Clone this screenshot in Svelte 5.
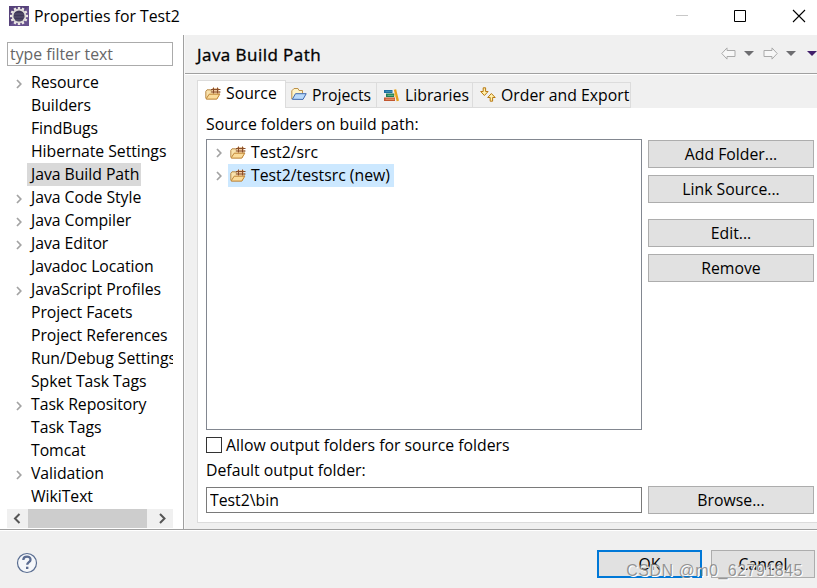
<script lang="ts">
	type Category = { name: string; expandable?: boolean };

	const categories: Category[] = [
		{ name: 'Resource', expandable: true },
		{ name: 'Builders' },
		{ name: 'FindBugs' },
		{ name: 'Hibernate Settings' },
		{ name: 'Java Build Path' },
		{ name: 'Java Code Style', expandable: true },
		{ name: 'Java Compiler', expandable: true },
		{ name: 'Java Editor', expandable: true },
		{ name: 'Javadoc Location' },
		{ name: 'JavaScript Profiles', expandable: true },
		{ name: 'Project Facets' },
		{ name: 'Project References' },
		{ name: 'Run/Debug Settings' },
		{ name: 'Spket Task Tags' },
		{ name: 'Task Repository', expandable: true },
		{ name: 'Task Tags' },
		{ name: 'Tomcat' },
		{ name: 'Validation', expandable: true },
		{ name: 'WikiText' }
	];

	const tabs = [
		{ id: 'source', label: 'Source' },
		{ id: 'projects', label: 'Projects' },
		{ id: 'libraries', label: 'Libraries' },
		{ id: 'order', label: 'Order and Export' }
	];

	const folders = ['Test2/src', 'Test2/testsrc (new)'];
	const teeth = Array.from({ length: 12 }, (_, i) => i * 30);

	let category = $state('Java Build Path');
	let tab = $state('source');
	let folder = $state('Test2/testsrc (new)');
	let output = $state('Test2\\bin');
	let allow = $state(false);
</script>

{#snippet chevron()}
	<svg class="chevron" width="6" height="10" viewBox="0 0 6 10">
		<path d="M1 1 4.8 5 1 9" fill="none" stroke="#a3a3a3" stroke-width="1.7" />
	</svg>
{/snippet}

{#snippet sourceIcon()}
	<svg width="16" height="13" viewBox="0 0 16 13">
		<path d="M.8 11V4.3l1.2-1.5h3.5l1 1.2H14v2.5l-2 5.2H1.3z" fill="#f9e2ac" stroke="#b98a48" />
		<path d="M7 1h7v5.5H7z" fill="#edc9a0" />
		<path d="M5.8 2.5h9.7M5.8 5h9.7M8.5.5v6M12.5.5v6" fill="none" stroke="#8a4f2b" />
		<path d="m1.2 11.8 3-4.6h10.6l-3 4.9H1.3z" fill="#fbdc9b" stroke="#c08535" />
	</svg>
{/snippet}

{#snippet tabIcon(id: string)}
	{#if id === 'source'}
		{@render sourceIcon()}
	{:else if id === 'projects'}
		<svg class="raised" width="16" height="14" viewBox="0 0 16 14">
			<path d="M.8 12V3.8L3 1.5h4l1 2h3.5v3" fill="#fff3c7" stroke="#bd9149" />
			<path d="M1.3 12.3 4.5 6.7h10.7L12 12.4z" fill="#b9d9fb" stroke="#4169ad" />
		</svg>
	{:else if id === 'libraries'}
		<svg width="16" height="13" viewBox="0 0 16 13">
			<path d="M1 1h8.5v3H1z" fill="#1f6fa3" />
			<path d="M2.5 2.5H9" stroke="#3f8fb4" />
			<path d="M3 4.5h8v3.5H3z" fill="#1e7d55" />
			<path d="M4.5 6.3h6" stroke="#6fbd94" />
			<path d="M1 8.5h11V12H1z" fill="#c2562f" />
			<path d="M2.5 10.2h9" stroke="#eca47a" />
			<path d="m12 .5 2.8 11.5" stroke="#e7a01c" stroke-width="2.4" />
			<path d="m11.5 4.5.8 3.5" stroke="#f2bd45" stroke-width="1.2" />
		</svg>
	{:else}
		<svg class="raised" width="16" height="15" viewBox="0 0 16 15">
			<path d="M3.2.8h2.4v3.7h2.5L4.4 8.5.7 4.5h2.5z" fill="#fff0ab" stroke="#b87913" />
			<path d="M10.2 14.2h2.4v-3.7h2.6l-3.8-4-3.7 4h2.5z" fill="#fff0ab" stroke="#b87913" />
		</svg>
	{/if}
{/snippet}

{#snippet arrow()}
	<svg width="15" height="13" viewBox="0 0 15 13">
		<path d="M.8 6.5 6 .9v2.6h8v6H6v2.6z" fill="#f7f7f7" stroke="#aaa" />
	</svg>
{/snippet}

{#snippet caret()}
	<svg class="caret" width="10" height="5" viewBox="0 0 10 5"><path d="M0 0h10L5 5z" fill="currentColor" /></svg>
{/snippet}

<div class="window">
	<header class="titlebar">
		<svg class="logo" width="20" height="20" viewBox="0 0 20 20">
			<path d="M0 0h20v20H0z" fill="#56427a" />
			<path d="M0 20 20 0v20z" fill="#67528d" />
			{#each teeth as angle}
				<path d="M8.8 1h2.4v4H8.8z" fill="#eeeae6" transform="rotate({angle} 10 10)" />
			{/each}
			<circle cx="10" cy="10" r="6.4" fill="#3f3858" stroke="#dedbd8" stroke-width="1.8" />
			<path d="M5 8h10M4.5 11h11M6 14h8" stroke="#5d5672" />
		</svg>
		<span class="title">Properties for Test2</span>
		<svg class="controls" width="131" height="14" viewBox="0 0 131 14">
			<path d="M1 6.5h12" stroke="#c8c8c8" />
			<path d="M59.5 1.5h11v11h-11z" fill="none" stroke="#000" />
			<path d="m118 1 12 12m0-12-12 12" stroke="#000" stroke-width="1.1" />
		</svg>
	</header>

	<div class="body">
		<aside>
			<input class="filter" placeholder="type filter text" />
			<div class="categories">
				{#each categories as item}
					<button class="category" onclick={() => (category = item.name)}>
						<span class="twist">{#if item.expandable}{@render chevron()}{/if}</span>
						<span class="name" class:selected={category === item.name}>{item.name}</span>
					</button>
				{/each}
			</div>
			<div class="scrollbar">
				<svg width="21" height="19" viewBox="0 0 21 19"><path d="M12.5 5 8 9.5l4.5 4.5" fill="none" stroke="#555" stroke-width="2" /></svg>
				<div class="thumb"></div>
				<svg width="26" height="19" viewBox="0 0 26 19"><path d="m13 5 4.5 4.5L13 14" fill="none" stroke="#555" stroke-width="2" /></svg>
			</div>
		</aside>

		<main>
			<div class="heading">
				<h1>Java Build Path</h1>
				<div class="history">
					{@render arrow()}
					{@render caret()}
					<span class="forward">{@render arrow()}</span>
					{@render caret()}
					<span class="menu">{@render caret()}</span>
				</div>
			</div>

			<div class="tabs">
				{#each tabs as item}
					<button class="tab {item.id}" class:active={tab === item.id} onclick={() => (tab = item.id)}>
						{@render tabIcon(item.id)}
						<span>{item.label}</span>
					</button>
				{/each}
			</div>

			<section class="panel">
				<p class="label">Source folders on build path:</p>
				<div class="columns">
					<div class="folders">
						{#each folders as item}
							<button class="folder" onclick={() => (folder = item)}>
								{@render chevron()}
								<span class="path" class:current={folder === item}>{@render sourceIcon()}<span>{item}</span></span>
							</button>
						{/each}
					</div>
					<div class="actions">
						<button class="push">Add Folder...</button>
						<button class="push">Link Source...</button>
						<button class="push gap">Edit...</button>
						<button class="push">Remove</button>
					</div>
				</div>
				<label class="allow"><input type="checkbox" bind:checked={allow} /><span>Allow output folders for source folders</span></label>
				<p class="label output">Default output folder:</p>
				<div class="columns">
					<input class="location" bind:value={output} />
					<button class="push">Browse...</button>
				</div>
			</section>
		</main>
	</div>

	<footer>
		<svg class="help" width="22" height="22" viewBox="0 0 22 22">
			<circle cx="11" cy="11" r="9.5" fill="#f5f7fa" stroke="#596d91" stroke-width="1.2" />
			<path d="M7.3 8c.2-4.6 7.5-4.3 7.2-.2-.2 2.4-3.3 2.4-3.3 5" fill="none" stroke="#5b6c91" stroke-width="2.3" />
			<path d="M10 14.7h2.4V17H10z" fill="#5b6c91" />
		</svg>
		<button class="push ok">OK</button>
		<button class="push cancel">Cancel</button>
		<span class="watermark">CSDN @m0_62791845</span>
	</footer>
</div>

<style>
	:global(body) {
		overflow: hidden;
	}

	.window {
		width: 817px;
		height: 588px;
		display: flex;
		flex-direction: column;
		background: #fff;
		color: #000;
		font-family: 'Open Sans', 'Noto Sans', sans-serif;
		font-size: 15.8px;
		line-height: 23px;
	}

	* {
		box-sizing: border-box;
	}

	button,
	input {
		font: inherit;
		color: inherit;
		margin: 0;
		border-radius: 0;
		outline: 0;
	}

	button {
		padding: 0;
		border: 0;
		background: none;
	}

	svg {
		display: block;
		flex: none;
	}

	.titlebar {
		height: 35px;
		display: flex;
		align-items: flex-start;
		padding: 6px 11px 0 9px;
	}

	.title {
		margin: -1px 0 0 5px;
	}

	.controls {
		margin: 3px 0 0 auto;
	}

	.body {
		height: 494px;
		display: flex;
	}

	aside {
		width: 184px;
		padding: 7px 10px 0 7px;
		border-right: 1px solid #a0a0a0;
	}

	.filter {
		display: block;
		width: 166px;
		height: 24px;
		padding: 0 2px;
		border: 1px solid #ababab;
		background: #fff;
	}

	.filter::placeholder {
		color: #666;
		opacity: 1;
	}

	.categories {
		height: 443px;
		padding-top: 5px;
		overflow: hidden;
	}

	.category {
		display: flex;
		align-items: center;
		height: 23px;
		white-space: nowrap;
	}

	.twist {
		width: 20px;
		padding: 2px 0 0 9px;
	}

	.name {
		padding: 0 4px;
		letter-spacing: -0.05px;
	}

	.selected {
		padding-right: 2px;
		background: #d9d9d9;
	}

	.scrollbar {
		height: 19px;
		display: flex;
		background: #f0f0f0;
	}

	.thumb {
		flex: 1;
		background: #cdcdcd;
	}

	main {
		flex: 1;
		min-width: 0;
		background: #f0f0f0;
		border-left: 1px solid #f8f8f8;
	}

	.heading {
		height: 39px;
		display: flex;
		justify-content: space-between;
		padding: 8px 0 0 12px;
		border-bottom: 1px solid #a0a0a0;
		box-shadow: 0 1px #fff;
	}

	h1 {
		margin: 0;
		font-size: 17px;
		font-weight: 400;
		letter-spacing: 0.45px;
		-webkit-text-stroke: 0.35px #000;
	}

	.history {
		display: flex;
		align-items: center;
		height: 20px;
		color: #6d6d70;
	}

	.caret {
		margin: 0 9px 0 8px;
	}

	.forward {
		transform: scaleX(-1);
	}

	.menu {
		color: #42206b;
		width: 10px;
		margin: 0 0 0 2px;
	}

	.menu .caret {
		margin: 0;
	}

	.tabs {
		height: 34px;
		padding: 6px 0 0 12px;
		display: flex;
		align-items: flex-end;
	}

	.tab {
		display: flex;
		align-items: center;
		height: 26px;
		gap: 5px;
		padding-left: 5px;
		border: 1px solid #dcdcdc;
		border-left: 0;
		white-space: nowrap;
	}

	.tab.active {
		height: 28px;
		padding: 0 0 2px 7px;
		background: #fff;
		border-left: 1px solid #dcdcdc;
		border-bottom: 0;
	}

	.raised {
		margin-bottom: 2px;
	}

	.source {
		width: 89px;
	}

	.projects {
		width: 91px;
	}

	.libraries {
		width: 96px;
		gap: 6px;
		padding-left: 6px;
	}

	.order {
		width: 158px;
		padding-left: 7px;
	}

	.panel {
		height: 415px;
		margin-left: 12px;
		padding: 5px 2px 0 8px;
		background: #fff;
		border: 1px solid #dcdcdc;
		border-top: 0;
		border-right: 0;
	}

	.label {
		margin: 0;
		height: 26px;
	}

	.columns {
		display: flex;
		gap: 6px;
	}

	.folders {
		width: 436px;
		height: 291px;
		padding: 1px 9px;
		border: 1px solid #828790;
	}

	.folder {
		display: flex;
		align-items: center;
		height: 23px;
	}

	.path {
		display: flex;
		align-items: center;
		gap: 5px;
		height: 23px;
		margin-left: 6px;
		padding: 0 4px 0 2px;
	}

	.current {
		background: #cce8ff;
	}

	.push {
		display: block;
		width: 166px;
		height: 28px;
		background: #e1e1e1;
		border: 1px solid #adadad;
	}

	.actions {
		padding-top: 1px;
	}

	.actions .push {
		margin-bottom: 7px;
	}

	.actions .gap {
		margin-top: 16px;
	}

	.allow {
		display: flex;
		align-items: center;
		gap: 4px;
		height: 30px;
	}

	.allow input {
		appearance: none;
		width: 16px;
		height: 16px;
		border: 1px solid #333;
		background: #fff;
	}

	.output {
		margin-top: -1px;
		height: 27px;
	}

	.location {
		width: 436px;
		height: 26px;
		margin-top: 1px;
		padding: 0 3px;
		border: 1px solid #7a7a7a;
	}

	footer {
		position: relative;
		height: 59px;
		display: flex;
		align-items: flex-start;
		padding: 20px 2px 0 16px;
		background: #f0f0f0;
		border-top: 1px solid #a0a0a0;
		box-shadow: inset 0 1px #fff;
	}

	.help {
		margin-top: 2px;
	}

	.ok {
		width: 105px;
		margin-left: auto;
		border: 2px solid #0078d7;
	}

	.cancel {
		width: 104px;
		margin-left: 9px;
	}

	.watermark {
		position: absolute;
		right: 14px;
		bottom: 6px;
		font: 16px/22px 'Liberation Sans', sans-serif;
		letter-spacing: 0.5px;
		color: rgba(125, 125, 125, 0.8);
		text-shadow: 1px 1px #fff;
		white-space: nowrap;
	}
</style>
